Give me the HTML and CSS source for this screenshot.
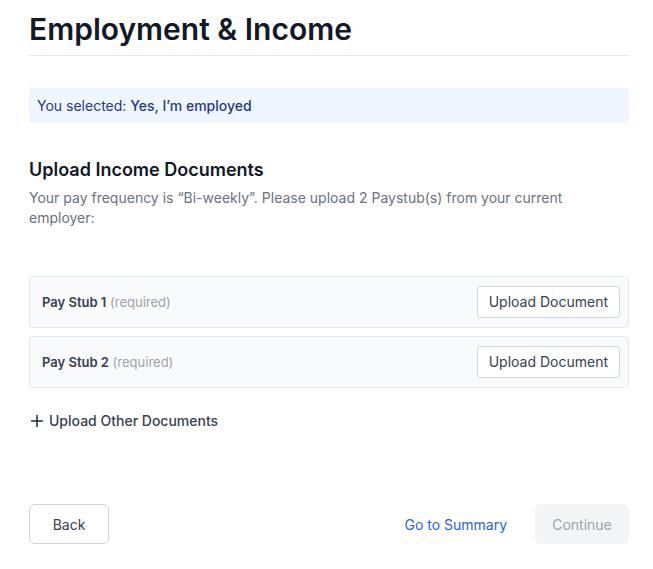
FILE: index.html
```html
<!DOCTYPE html>
<html lang="en">
<head>
<meta charset="utf-8">
<title>Employment &amp; Income</title>
<link rel="stylesheet" href="styles.css">
</head>
<body>
<main class="page">
  <h1 class="title">Employment &amp; Income</h1>
  <div class="selected">You selected: <strong>Yes, I’m employed</strong></div>
  <section class="upload">
    <h2 class="upload-title">Upload Income Documents</h2>
    <p class="upload-desc">Your pay frequency is “Bi-weekly”. Please upload 2 Paystub(s) from your current employer:</p>
    <div class="docs">
      <div class="doc">
        <div class="doc-label"><span class="doc-name">Pay Stub 1</span> <span class="doc-req">(required)</span></div>
        <button class="btn-upload">Upload Document</button>
      </div>
      <div class="doc">
        <div class="doc-label"><span class="doc-name">Pay Stub 2</span> <span class="doc-req">(required)</span></div>
        <button class="btn-upload">Upload Document</button>
      </div>
    </div>
    <button class="add-other">
      <svg class="plus" width="14" height="14" viewBox="0 0 14 14" aria-hidden="true"><path d="M7 1.5v11M1.5 7h11" stroke="currentColor" stroke-width="1.5" fill="none" stroke-linecap="round"/></svg>
      Upload Other Documents
    </button>
  </section>
  <footer class="actions">
    <button class="btn-back">Back</button>
    <div class="actions-right">
      <a class="summary-link" href="#">Go to Summary</a>
      <button class="btn-continue" disabled>Continue</button>
    </div>
  </footer>
</main>
</body>
</html>
```

FILE: styles.css
```css
* { box-sizing: border-box; }
html, body { margin: 0; padding: 0; background: #ffffff; }
body {
  font-family: Inter, "Noto Sans", "Liberation Sans", sans-serif;
  color: #111827;
}
.page {
  width: 600px;
  margin-left: 29px;
  padding-top: 11px;
}
.title {
  margin: 0;
  font-size: 30px;
  line-height: 36px;
  font-weight: 600;
  color: #111827;
  padding-bottom: 8px;
  border-bottom: 1px solid #e5e7eb;
}
.selected {
  margin-top: 32px;
  background: #eff6ff;
  color: #1e3a8a;
  font-size: 14px;
  line-height: 20px;
  padding: 8px 8px 7px 8px;
}
.selected strong { font-weight: 500; }
.upload { margin-top: 33px; }
.upload-title {
  margin: 0;
  font-size: 18px;
  line-height: 28px;
  font-weight: 600;
  color: #111827;
}
.upload-desc {
  margin: 4px 0 0 0;
  font-size: 14px;
  line-height: 20px;
  color: #6b7280;
}
.docs {
  margin-top: 48px;
  display: flex;
  flex-direction: column;
  gap: 8px;
}
.doc {
  display: flex;
  align-items: center;
  justify-content: space-between;
  background: #f9fafb;
  border: 1px solid #e5e7eb;
  border-radius: 4px;
  padding: 9px 8px 9px 12px;
}
.doc-label { font-size: 13px; line-height: 20px; }
.doc-name { font-weight: 600; color: #374151; }
.doc-req { color: #9ca3af; }
.btn-upload {
  font-family: inherit;
  font-size: 14px;
  line-height: 20px;
  color: #374151;
  background: #ffffff;
  border: 1px solid #d1d5db;
  border-radius: 4px;
  padding: 5px 11px;
  height: 32px;
}
.add-other {
  margin-top: 23px;
  display: flex;
  align-items: center;
  gap: 5px;
  background: none;
  border: 0;
  padding: 0 0 0 1px;
  font-family: inherit;
  font-size: 14px;
  line-height: 20px;
  font-weight: 500;
  color: #374151;
}
.plus { color: #1f2937; }
.actions {
  margin-top: 73px;
  display: flex;
  align-items: center;
  justify-content: space-between;
}
.actions-right {
  display: flex;
  align-items: center;
  gap: 28px;
}
.btn-back {
  font-family: inherit;
  font-size: 14px;
  color: #374151;
  background: #ffffff;
  border: 1px solid #d1d5db;
  border-radius: 6px;
  height: 40px;
  width: 80px;
}
.summary-link {
  font-size: 14px;
  color: #2563eb;
  text-decoration: none;
}
.btn-continue {
  font-family: inherit;
  font-size: 14px;
  color: #9ca3af;
  background: #f3f4f6;
  border: 0;
  border-radius: 6px;
  height: 40px;
  width: 94px;
}
```
